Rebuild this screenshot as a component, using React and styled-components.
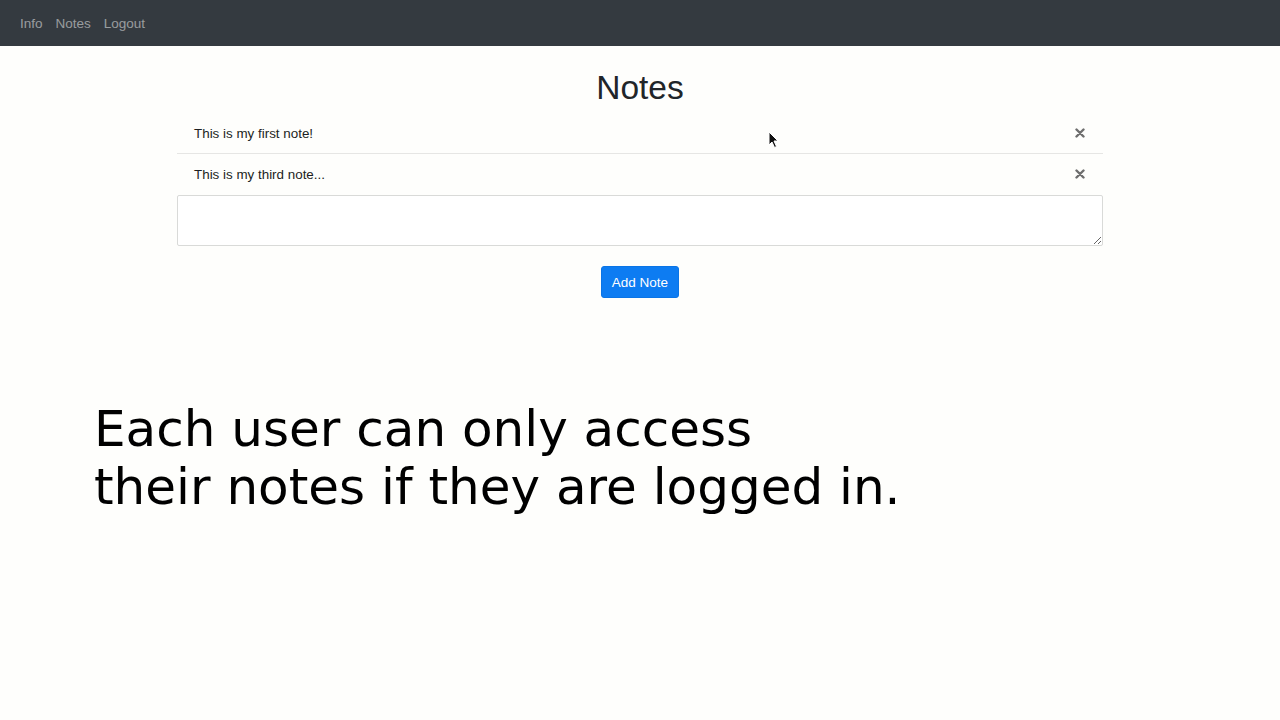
import React from "react";
import styled, { createGlobalStyle } from "styled-components";

const notes = ["This is my first note!", "This is my third note..."];

const GlobalStyle = createGlobalStyle`
  html, body {
    margin: 0;
    padding: 0;
    background: #fefefc;
    font-family: "Liberation Sans", Arial, sans-serif;
  }
`;

function App() {
  return (
    <>
      <GlobalStyle />
      <Page>
        <Navbar>
          <NavLink>Info</NavLink>
          <NavLink>Notes</NavLink>
          <NavLink>Logout</NavLink>
        </Navbar>
        <Container>
          <Title>Notes</Title>
          <NoteList>
            {notes.map((n) => (
              <NoteItem key={n}>
                <span>{n}</span>
                <DeleteBtn>
                  <svg width="10" height="10" viewBox="0 0 10 10">
                    <path
                      d="M1.5 1.5 L8.5 8.5 M8.5 1.5 L1.5 8.5"
                      stroke="#6e6e6e"
                      strokeWidth="2.4"
                      strokeLinecap="round"
                    />
                  </svg>
                </DeleteBtn>
              </NoteItem>
            ))}
          </NoteList>
          <NoteInput />
          <AddButton>Add Note</AddButton>
        </Container>
        <Caption>
          Each user can only access
          <br />
          their notes if they are logged in.
        </Caption>
        <Cursor width="12" height="18" viewBox="0 0 12 18">
          <path
            d="M1 1 L1 14 L4 11 L6.5 16.5 L8.5 15.5 L6 10 L10 10 Z"
            fill="#111"
            stroke="#fff"
            strokeWidth="1"
          />
        </Cursor>
      </Page>
    </>
  );
}

const Page = styled.div`
  position: relative;
  width: 1280px;
  height: 720px;
  overflow: hidden;
`;

const Navbar = styled.nav`
  height: 46px;
  background: #343a40;
  display: flex;
  align-items: center;
  padding: 0 13.5px;
  box-sizing: border-box;
`;

const NavLink = styled.a`
  color: rgba(255, 255, 255, 0.5);
  font-size: 13.5px;
  padding: 0 6.5px;
  cursor: pointer;
`;

const Container = styled.div`
  width: 926px;
  margin: 0 auto;
  display: flex;
  flex-direction: column;
  align-items: center;
`;

const Title = styled.h1`
  margin: 24px 0 7px;
  font-size: 33.5px;
  font-weight: 400;
  line-height: 36px;
  color: #212529;
`;

const NoteList = styled.div`
  width: 100%;
  display: flex;
  flex-direction: column;
`;

const NoteItem = styled.div`
  height: 40px;
  display: flex;
  align-items: center;
  justify-content: space-between;
  padding: 0 17px;
  border-bottom: 1px solid #e6e6e4;
  font-size: 13.4px;
  color: #1c1f22;
  &:last-child {
    border-bottom: none;
  }
`;

const DeleteBtn = styled.span`
  display: flex;
  align-items: center;
  margin-right: 1px;
  cursor: pointer;
`;

const NoteInput = styled.textarea`
  width: 100%;
  height: 51px;
  box-sizing: border-box;
  margin-top: 1px;
  border: 1px solid #d9dad8;
  border-radius: 2px;
  background: #fff;
  font-family: inherit;
  font-size: 13px;
  outline: none;
`;

const AddButton = styled.button`
  margin-top: 20px;
  width: 78px;
  height: 32px;
  background: #0d7cf2;
  color: #fff;
  border: 1px solid #0a74e6;
  border-radius: 3px;
  font-family: inherit;
  font-size: 13.5px;
  cursor: pointer;
`;

const Caption = styled.div`
  margin: 102px 0 0 94px;
  font-family: "DejaVu Sans", sans-serif;
  font-size: 50px;
  line-height: 58px;
  color: #000;
`;

const Cursor = styled.svg`
  position: absolute;
  left: 768px;
  top: 131px;
`;

export default App;
